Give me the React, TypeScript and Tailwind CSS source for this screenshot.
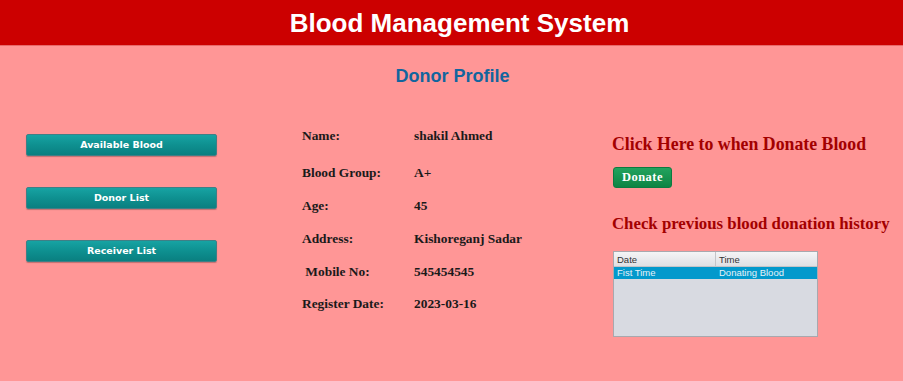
export default function App() {
  const menu = ["Available Blood", "Donor List", "Receiver List"];
  const details: [string, string][] = [
    ["Name:", "shakil Ahmed"],
    ["Blood Group:", "A+"],
    ["Age:", "45"],
    ["Address:", "Kishoreganj Sadar"],
    [" Mobile No:", "545454545"],
    ["Register Date:", "2023-03-16"],
  ];
  const rowGaps = ["mt-0", "mt-[21px]", "mt-[17px]", "mt-[17px]", "mt-[17px]", "mt-[16px]"];

  return (
    <div className="w-[903px] h-[381px] bg-[#ff9696] overflow-hidden">
      <header className="h-[46px] bg-[#cc0000] border-b border-[#e86a6a] flex items-center justify-center">
        <h1 className="text-white font-bold text-[26px] leading-none pl-[16px] font-['Liberation_Sans',Arial,sans-serif]">
          Blood Management System
        </h1>
      </header>

      <h2 className="mt-[20px] h-[20px] leading-[20px] text-center text-[#12659e] font-bold text-[18px] pl-[2px] font-['Liberation_Sans',Arial,sans-serif]">
        Donor Profile
      </h2>

      <div className="mt-[34px] flex pl-[26px]">
        {/* left menu */}
        <div className="w-[191px] shrink-0 flex flex-col gap-[31px] mt-[14px]">
          {menu.map((m) => (
            <button
              key={m}
              className="h-[22px] w-full rounded-[2px] border border-[#3f7f86] bg-gradient-to-b from-[#17a3a3] via-[#0e9090] to-[#0a7f80] text-white font-bold text-[9.5px] font-['DejaVu_Sans',sans-serif] shadow-[0_1px_1px_rgba(0,0,0,0.25)]"
            >
              {m}
            </button>
          ))}
        </div>

        {/* details */}
        <div className="ml-[85px] w-[310px] shrink-0 flex flex-col pt-[8px] font-['Liberation_Serif','Times_New_Roman',serif] font-bold text-[13.4px] text-[#1a1a1a]">
          {details.map(([k, v], i) => (
            <div key={k} className={`flex h-[16px] leading-[16px] ${rowGaps[i]}`}>
              <span className="w-[112px] whitespace-pre">{k}</span>
              <span>{v}</span>
            </div>
          ))}
        </div>

        {/* right side */}
        <div className="flex flex-col shrink-0 pt-[13px] whitespace-nowrap font-['Liberation_Serif','Times_New_Roman',serif]">
          <p className="h-[22px] leading-[22px] text-[17.8px] font-bold text-[#a30000]">
            Click Here to when Donate Blood
          </p>
          <button className="mt-[12px] ml-[1px] w-[59px] h-[21px] rounded-[3px] border border-[#0d7a40] bg-gradient-to-b from-[#22a35e] to-[#0c8443] text-white font-bold text-[12.5px] tracking-[0.5px]">
            Donate
          </button>
          <p className="mt-[25px] h-[22px] leading-[22px] text-[16.8px] font-bold text-[#a30000]">
            Check previous blood donation history
          </p>
          <div className="mt-[16px] ml-[1px] w-[205px] h-[86px] border border-[#a8a8ae] bg-[#d8dae1] font-['Liberation_Sans',Arial,sans-serif] text-[9.5px]">
            <div className="flex h-[15px] bg-gradient-to-b from-[#f4f4f6] to-[#dfe0e4] border-b border-[#c4c4c8] text-[#333]">
              <span className="w-[102px] pl-[3px] leading-[15px] border-r border-[#c4c4c8]">Date</span>
              <span className="pl-[3px] leading-[15px]">Time</span>
            </div>
            <div className="flex h-[12px] bg-[#0399cc] text-[#e6f2f8]">
              <span className="w-[102px] pl-[3px] leading-[12px]">Fist Time</span>
              <span className="pl-[3px] leading-[12px]">Donating Blood</span>
            </div>
          </div>
        </div>
      </div>
    </div>
  );
}
